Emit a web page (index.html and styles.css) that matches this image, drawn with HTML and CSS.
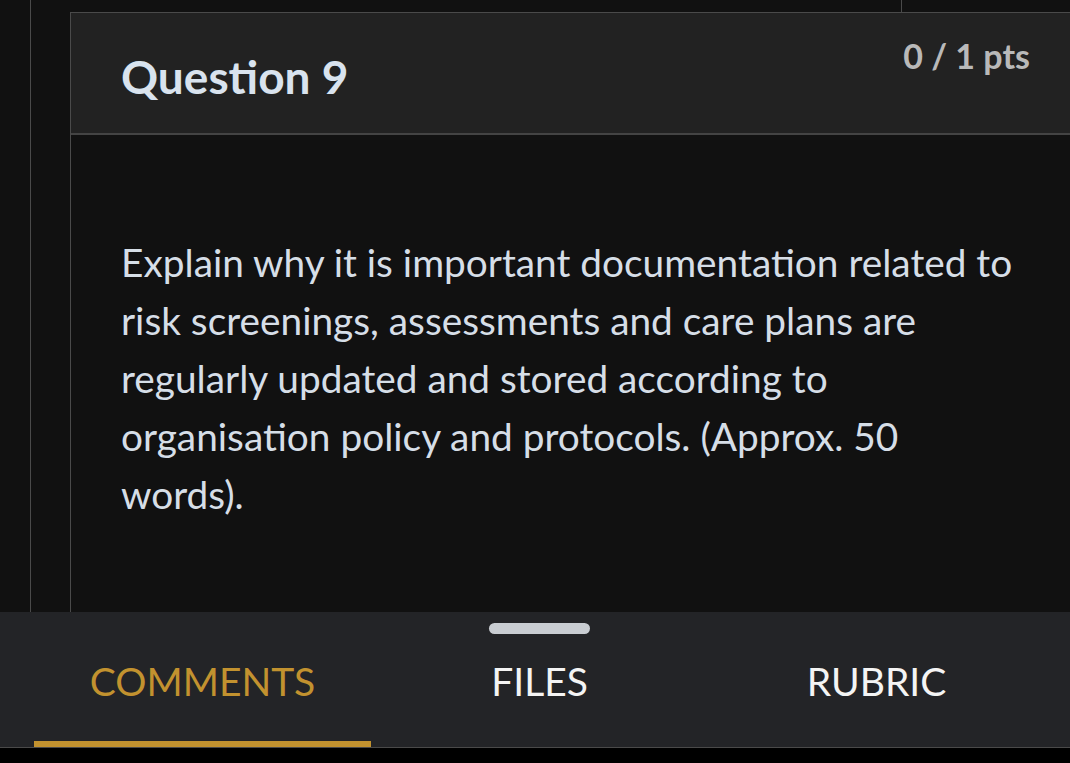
FILE: index.html
```html
<!DOCTYPE html>
<html>
	<head>
		<meta charset="UTF-8">
		<title>Question 9</title>
		<link rel="stylesheet" href="styles.css">
	</head>
	<body>
		<div class="page">
			<div class="main">
				<div class="rail"></div>
				<div class="content">
					<!--上方残留的边线-->
					<div class="strip"><div class="strip-cell"></div></div>
					<div class="card">
						<div class="card-head">
							<h2 class="title">Question 9</h2>
							<div class="pts">0 / 1 pts</div>
						</div>
						<div class="card-body">
							<p class="text">Explain why it is important documentation related to risk screenings, assessments and care plans are regularly updated and stored according to organisation policy and protocols. (Approx. 50 words).</p>
						</div>
					</div>
				</div>
			</div>

			<!--底部标签栏-->
			<div class="tabbar">
				<div class="handle"></div>
				<div class="tabs">
					<div class="tab on">COMMENTS</div>
					<div class="tab">FILES</div>
					<div class="tab">RUBRIC</div>
				</div>
			</div>
			<div class="foot"></div>
		</div>
	</body>
</html>
```

FILE: styles.css
```css
*{
	margin: 0px;
	padding: 0px;
	box-sizing: border-box;
}

body{
	background-color: #111111;
	font-family: Lato, "Liberation Sans", sans-serif;
	overflow: hidden;
}

.page{
	width: 1070px;
	height: 763px;
	display: flex;
	flex-direction: column;
}

.main{
	height: 612px;
	display: flex;
}

/*左边的竖线*/
.rail{
	width: 31px;
	border-right: 1px solid #4a4a4a;
}

.content{
	flex: 1;
	margin-left: 39px;
	display: flex;
	flex-direction: column;
	overflow: hidden;
}

.strip{
	height: 12px;
	display: flex;
}

.strip-cell{
	width: 832px;
	border-right: 1px solid #4a4a4a;
}

.card{
	flex: 1;
	border-top: 1px solid #4a4a4a;
	border-left: 1px solid #4a4a4a;
	display: flex;
	flex-direction: column;
}

.card-head{
	height: 122px;
	background-color: #222222;
	border-bottom: 2px solid #444444;
	display: flex;
	justify-content: space-between;
	padding: 0 40px 0 50px;
}

.title{
	font-size: 46px;
	font-weight: bold;
	color: #d9e3ee;
	margin-top: 37px;
	line-height: 54px;
}

.pts{
	font-size: 34px;
	font-weight: bold;
	color: #b9b9b9;
	margin-top: 22px;
	line-height: 42px;
}

.card-body{
	flex: 1;
	padding: 98px 10px 0 50px;
}

.text{
	font-size: 38.8px;
	line-height: 58px;
	color: #d6dee7;
	width: 900px;
}

/*底部标签*/
.tabbar{
	height: 136px;
	background-color: #232427;
	border-bottom: 1px solid #4a4a4a;
	padding: 0 25px 0 34px;
	display: flex;
	flex-direction: column;
}

.handle{
	width: 101px;
	height: 11px;
	border-radius: 6px;
	background-color: #c9cdd2;
	margin: 11px auto 0;
}

.tabs{
	flex: 1;
	display: flex;
}

.tab{
	flex: 1;
	display: flex;
	align-items: center;
	justify-content: center;
	font-size: 39px;
	color: #f4f4f4;
	padding-bottom: 14px;
	border-bottom: 6px solid transparent;
}

.tab.on{
	color: #c2922f;
	border-bottom-color: #c2922f;
}

.foot{
	flex: 1;
	background-color: #000000;
}
```
